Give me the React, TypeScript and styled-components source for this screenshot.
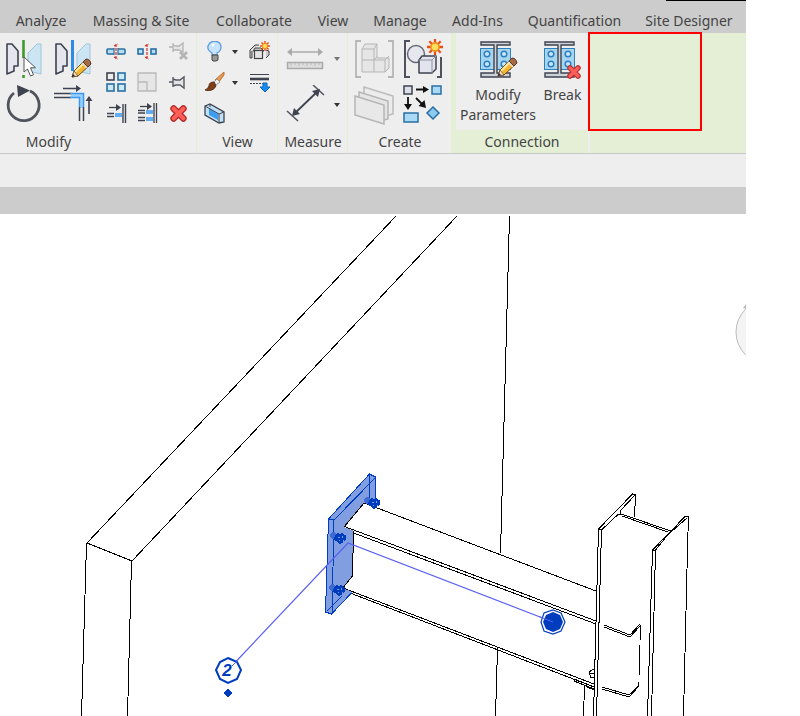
import React from "react";
import styled, { createGlobalStyle } from "styled-components";

const GlobalStyle = createGlobalStyle`
  *, *::before, *::after { box-sizing: border-box; }
  body { margin: 0; background: #ffffff; }
`;

const ink = "#3f4350";
const blue = "#003cbe";

const Page = styled.main`
  padding-right: 54px;
  font-family: "Noto Sans", "Open Sans", sans-serif;
  font-size: 14px;
  line-height: 20px;
  color: #444444;
`;

const TabBar = styled.nav`
  position: relative;
  display: grid;
  grid-template-columns: 76fr 124fr 102fr 56fr 78fr 77fr 117fr 112fr;
  height: 33px;
  padding: 9px 1px 0 3px;
  background: #cccccc;
`;

const WindowEdge = styled.span`
  position: absolute;
  top: 0;
  right: 0;
  width: 80px;
  height: 1px;
  background: #000000;
`;

const Tab = styled.button`
  display: flex;
  justify-content: center;
  padding: 2px 0;
  border: 0;
  background: none;
  font: inherit;
  color: inherit;
  white-space: nowrap;
`;

const Ribbon = styled.section`
  position: relative;
  display: flex;
  height: 121px;
  background: #e4efd6;
  border-bottom: 1px solid #c8c8c8;
`;

const Panel = styled.section<{ $width: number; $gapAfter?: number; $last?: boolean }>`
  display: flex;
  flex-direction: column;
  flex: none;
  width: ${(p) => p.$width}px;
  margin-right: ${(p) => p.$gapAfter ?? 0}px;
  background: #eeeeee;
  border-right: ${(p) => (p.$last ? "2px solid #eeeeee" : "0")};
  box-shadow: ${(p) => (p.$last ? "none" : "inset -1px 0 0 #e2efd0")};
`;

const PanelBody = styled.div<{ $indent?: number }>`
  display: flex;
  gap: 3px;
  height: 97px;
  padding: 3px 0 0 ${(p) => p.$indent ?? 0}px;
`;

const PanelLabel = styled.h2<{ $active?: boolean; $inset?: number }>`
  margin: 0;
  height: 23px;
  padding: 2px ${(p) => p.$inset ?? 0}px 0 0;
  font-size: 14px;
  font-weight: 400;
  text-align: center;
  background: ${(p) => (p.$active ? "#e4efd6" : "transparent")};
`;

const ToolGrid = styled.div<{ $columns: string; $row: number }>`
  display: grid;
  grid-template-columns: ${(p) => p.$columns};
  grid-auto-rows: ${(p) => p.$row}px;
  place-items: center;
`;

const CommandRow = styled.div`
  display: flex;
  align-items: flex-start;
`;

const ToolButton = styled.button`
  display: flex;
  padding: 0;
  border: 0;
  background: none;
`;

const CommandButton = styled.button<{ $width: number }>`
  display: flex;
  flex-direction: column;
  align-items: center;
  gap: 6px;
  width: ${(p) => p.$width}px;
  padding: 3px 0 0;
  border: 0;
  background: none;
  font: inherit;
  color: inherit;
`;

const Highlight = styled.div`
  position: absolute;
  top: -1px;
  left: 588px;
  width: 114px;
  height: 99px;
  border: 2px solid #ff0000;
`;

const OptionsBar = styled.div`
  height: 33px;
  background: #eeeeee;
`;

const DocumentBar = styled.div`
  height: 27px;
  background: #cccccc;
`;

const Drawing = styled.svg`
  display: block;
  width: 100%;
  height: auto;
`;

type ToolProps = { name: string; disabled?: boolean; children: React.ReactNode };

const Large = ({ name, disabled, children }: ToolProps) => (
  <ToolButton aria-label={name} disabled={disabled}>
    <svg width="41" height="40" viewBox="0 0 41 40" fill="none">{children}</svg>
  </ToolButton>
);

const Small = ({ name, disabled, children }: ToolProps) => (
  <ToolButton aria-label={name} disabled={disabled}>
    <svg width="21" height="21" viewBox="0 0 21 21" fill="none">{children}</svg>
  </ToolButton>
);

const Caret = ({ name, muted }: { name: string; muted?: boolean }) => (
  <ToolButton aria-label={name}>
    <svg width="8" height="6" viewBox="0 0 8 6"><path d="M1 1h6L4 5z" fill={muted ? "#777" : "#333"} /></svg>
  </ToolButton>
);

const Pencil = () => (
  <g>
    <path d="M19 38l2-6 12-12 5 5-13 12z" fill="#f5b52e" stroke="#6b4a1c" />
    <path d="M22 33l11-11" stroke="#ffe89a" strokeWidth="2" />
    <path d="M19 38l2-6 4 5z" fill="#f7dfbd" stroke="#5a4630" strokeWidth=".7" />
    <path d="M19 38l1-3 2 2z" fill="#222" />
    <path d="M30 23l3-3q4 0 5 5l-3 3z" fill="#a66a44" stroke="#5a3c2c" />
    <path d="M29 24l5 5" stroke="#ddd" strokeWidth="1.5" />
  </g>
);

const MirrorHalves = () => (
  <g>
    <path d="M3 5h5l6 7v15h-4v5l-7 3z" fill="#e4e6ee" stroke={ink} strokeWidth="1.6" strokeLinejoin="round" />
    <path d="M37 5h-4l-9 9v18l13 3z" fill="#cbe5f4" stroke="#9cc6dc" />
  </g>
);

const Sun = ({ x, y, r }: { x: number; y: number; r: number }) => (
  <g transform={`translate(${x} ${y}) scale(${r / 7})`}>
    <path d="M0-7V7M-7 0H7M-5-5L5 5M-5 5L5-5" stroke="#e8501a" strokeWidth="2" />
    <circle r="3.6" fill="#ffe05a" stroke="#f28a1c" strokeWidth="1.4" />
  </g>
);

const Column = () => (
  <g transform="translate(-2 0)">
    <rect x="4.5" y="9.5" width="30" height="21" fill="#a6d5f2" stroke="#2f7fb8" />
    {[[11, 15], [11, 25], [28, 15], [28, 25]].map(([x, y]) => (
      <circle key={`${x}-${y}`} cx={x} cy={y} r="2.8" fill="#c8e6f8" stroke="#2f80c0" strokeWidth="1.5" />
    ))}
    <path d="M5 3h29v3H21v28h13v4H5v-4h13V6H5z" fill="#cfd1d8" stroke={ink} strokeWidth="1.4" />
  </g>
);

const DeleteMark = ({ x, y, size }: { x: number; y: number; size: number }) => (
  <g transform={`translate(${x} ${y}) scale(${size / 14})`}>
    <path d="M3 3l8 8M11 3l-8 8" stroke="#b52d2b" strokeWidth="5.5" strokeLinecap="round" />
    <path d="M3 3l8 8M11 3l-8 8" stroke="#ff5f58" strokeWidth="3.2" strokeLinecap="round" />
  </g>
);

const ModifyPanel = () => (
  <Panel $width={197}>
    <PanelBody>
      <ToolGrid $columns="49px 49px" $row={46}>
        <Large name="Mirror, pick axis">
          <MirrorHalves />
          <path d="M19.5 1v18M19.5 36v3" stroke="#3d9a2e" strokeWidth="2.6" />
          <path d="M20 18v15l3.5-3 3 7 3-1.2-3-7h5z" fill="#fff" stroke="#555" />
        </Large>
        <Large name="Mirror, draw axis">
          <MirrorHalves />
          <path d="M19.5 1v31" stroke="#2c8be8" strokeWidth="3" />
          <Pencil />
        </Large>
        <Large name="Rotate">
          <path d="M26 6A15.5 15.5 0 1 1 10 8" stroke="#50535b" strokeWidth="2.8" />
          <path d="M13 0l13 5.5L14 12z" fill={ink} />
        </Large>
        <Large name="Trim to corner">
          <path d="M18 8h12.5v15h-4.5V12.5h-8z" fill="#9bd1ff" />
          <path d="M1 8.5h17M1 12.5h17M26.5 22v14M30.5 22v14" stroke={ink} strokeWidth="1.5" />
          <path d="M17 8.5h13.5V22M17 12.5h9.5V22" stroke="#3c98ec" strokeWidth="1.5" />
          <path d="M10 3.5h15M36 13v16" stroke={ink} strokeWidth="1.6" />
          <path d="M23 0l5 3.5L23 7zM32.5 16L36 11l3.5 5z" fill={ink} />
        </Large>
      </ToolGrid>
      <ToolGrid $columns="31px 31px 31px" $row={31}>
        <Small name="Split element">
          <rect x="1" y="8" width="18" height="5" rx="1" fill="#b9def3" stroke="#286fa3" strokeWidth="1.6" />
          <rect x="8" y="6" width="4" height="9" fill="#eee" />
          <path d="M8 7v7M12 7v7" stroke="#286fa3" strokeWidth="1.2" />
          <path d="M10 3v15M8 5l4-2M8 16l4 2" stroke="#d12f28" strokeWidth="1.2" strokeDasharray="3 1" />
        </Small>
        <Small name="Split with gap">
          <rect x="1" y="8" width="5" height="5" fill="#b9def3" stroke="#286fa3" strokeWidth="1.6" />
          <rect x="14" y="8" width="5" height="5" fill="#b9def3" stroke="#286fa3" strokeWidth="1.6" />
          <path d="M10 3v15M8 5l4-2M8 16l4 2" stroke="#d12f28" strokeWidth="1.2" strokeDasharray="3 1" />
        </Small>
        <Small name="Unpin" disabled>
          <path d="M1 6h4M5 2v9M5 4l3 1h3l4-3v9l-4-2H8L5 9" fill="#e4e4e4" stroke="#b4b4b4" strokeWidth="1.3" />
          <path d="M12 11l7 7M19 11l-7 7" stroke="#b4b4b4" strokeWidth="2.8" />
        </Small>
        <Small name="Array">
          <rect x="1" y="1" width="7" height="7" fill="#eee" stroke={ink} strokeWidth="1.6" />
          <rect x="12" y="1" width="7" height="7" fill="#cde9f8" stroke="#286fa3" strokeWidth="1.6" />
          <rect x="1" y="12" width="7" height="7" fill="#cde9f8" stroke="#286fa3" strokeWidth="1.6" />
          <rect x="12" y="12" width="7" height="7" fill="#cde9f8" stroke="#286fa3" strokeWidth="1.6" />
        </Small>
        <Small name="Scale" disabled>
          <path d="M1 1h18v18H1zM1 10h9v9" fill="#e6e6e6" stroke="#b9b9b9" strokeWidth="1.3" />
        </Small>
        <Small name="Pin">
          <path d="M1 10h4M5 5v10M5 7l3 1h4l4-3v11l-4-3H8l-3 1" fill="#e4e4e8" stroke="#555861" strokeWidth="1.4" />
        </Small>
        <Small name="Trim single">
          <path d="M1 10.5h7M1 13.5h7M17 1v19M19.5 1v19" stroke={ink} strokeWidth="1.4" />
          <path d="M9 12h7" stroke="#62adf2" strokeWidth="4" />
          <path d="M3 4.5h8" stroke={ink} strokeWidth="1.3" />
          <path d="M10 1l5 3.5L10 8z" fill={ink} />
        </Small>
        <Small name="Trim multiple">
          <path d="M1 7.5h7M1 10h7M1 14.5h7M1 17.5h7M17 0v20M19.5 0v20" stroke={ink} strokeWidth="1.3" />
          <path d="M9 9h7M9 16h7" stroke="#62adf2" strokeWidth="4" />
          <path d="M3 3.5h8" stroke={ink} strokeWidth="1.3" />
          <path d="M10 0l5 3.5L10 7z" fill={ink} />
        </Small>
        <Small name="Delete"><DeleteMark x={2} y={2} size={17} /></Small>
      </ToolGrid>
    </PanelBody>
    <PanelLabel $inset={100}>Modify</PanelLabel>
  </Panel>
);

const ViewPanel = () => (
  <Panel $width={81}>
    <PanelBody $indent={1}>
      <ToolGrid $columns="32px 10px 38px" $row={31}>
        <Small name="Hide in view">
          <path d="M8 14v-2Q3 9 4 5 6 0 11 0q6 1 6 6 0 4-4 6v2z" fill="#c6e4ff" stroke="#5f9bdc" strokeWidth="1.3" />
          <path d="M8 5l2-2" stroke="#fff" strokeWidth="2" />
          <path d="M8 14h6v5l-2 1H9l-1-1z" fill="#999" stroke="#444" />
        </Small>
        <Caret name="Hide options" />
        <Small name="New view">
          <path d="M1 9l5-5h4M1 9v8h2v-7M17 9l3 1v4l-3 3M4 10h11l-3-3H6z" fill="#ccc" stroke="#444" />
          <rect x="5.5" y="9.5" width="8" height="8" fill="#e5e5e5" stroke="#444" strokeWidth="1.2" />
          <Sun x={16} y={5} r={5} />
        </Small>
        <Small name="Override graphics">
          <path d="M20 0l-9 8 3 3 6-8z" fill="#ec9b50" stroke="#b66e31" />
          <path d="M13 7l-3 3 2 3 4-3z" fill="#eee" stroke="#888" strokeWidth=".8" />
          <path d="M10 10q-5 0-5 4-1 3-4 4 8 2 11-4z" fill="#7b4019" stroke="#5e2d10" />
        </Small>
        <Caret name="Override options" />
        <Small name="Displace lines">
          <path d="M1 2.5h19" stroke={ink} />
          <path d="M1 7h19" stroke={ink} strokeWidth="2.6" />
          <path d="M1 11.5h14" stroke={ink} strokeDasharray="2 1" />
          <path d="M14 11h4v4h3l-5 5-5-5h3z" fill="#168cf2" stroke="#0867bb" />
        </Small>
        <Small name="Selection box">
          <path d="M1 3l5-2 14 8v10l-5 1L1 12z" fill="#bfe0f5" stroke={ink} strokeWidth="1.3" />
          <path d="M5 5l9 6v6L5 12z" fill="#3c9cf4" />
          <path d="M1 3l14 8v9M15 11l5-2M6 1v3" stroke={ink} />
        </Small>
      </ToolGrid>
    </PanelBody>
    <PanelLabel>View</PanelLabel>
  </Panel>
);

const MeasurePanel = () => (
  <Panel $width={70}>
    <PanelBody>
      <ToolGrid $columns="54px 10px" $row={46}>
        <Large name="Measure between references" disabled>
          <path d="M5 13h30" stroke="#aaa" strokeWidth="1.5" />
          <path d="M2 13l5-4v8zM38 13l-5-4v8z" fill="#aaa" />
          <path d="M2.5 23.5h35v6h-35z" fill="#ddd" stroke="#aaa" strokeWidth="1.5" />
          <path d="M6 24v3M10 24v2M14 24v3M18 24v2M22 24v3M26 24v2M30 24v3M34 24v2" stroke="#bbb" />
        </Large>
        <Caret name="Measure options" muted />
        <Large name="Aligned dimension">
          <path d="M9 29L33 6" stroke={ink} strokeWidth="1.8" />
          <path d="M2 26l11 10M28 0l11 10" stroke="#555862" strokeWidth="1.6" />
          <path d="M7 31l2-8 6 6zM35 4l-8 2 6 6z" fill={ink} />
        </Large>
        <Caret name="Dimension options" />
      </ToolGrid>
    </PanelBody>
    <PanelLabel>Measure</PanelLabel>
  </Panel>
);

const CreatePanel = () => (
  <Panel $width={104} $gapAfter={4}>
    <PanelBody $indent={2}>
      <ToolGrid $columns="49px 49px" $row={46}>
        <Large name="Create assembly" disabled>
          <path d="M7 2H2v36h5M34 2h5v36h-5" stroke="#b5b5b5" strokeWidth="1.8" />
          <path d="M8 10l3-5h12v14h12v10l-4 4H8z" fill="#e6e6e6" stroke="#b5b5b5" strokeLinejoin="round" />
          <path d="M8 10h12v23M8 21h23v12M20 10l3-5M20 21l3-3M31 21l4-4" stroke="#b5b5b5" />
        </Large>
        <Large name="Create parts">
          <path d="M7 2H2v36h5M34 38h4V18" stroke="#4f525c" strokeWidth="2" />
          <circle cx="13" cy="15" r="8.5" fill="#e6e8ef" stroke="#686c76" strokeWidth="1.5" />
          <path d="M16 21l3-4h14v13l-4 4H16z" fill="#e1e4ed" stroke={ink} strokeWidth="1.5" strokeLinejoin="round" />
          <path d="M16 21h13v13M29 21l4-4" stroke="#8f93a0" />
          <Sun x={32} y={8} r={8} />
        </Large>
        <Large name="Create group" disabled>
          <path d="M10 8V2l29 9v18l-4 1" fill="#ececec" stroke="#bbb" strokeWidth="1.5" />
          <path d="M5 12V7l29 9v18l-4 1" fill="#e5e5e5" stroke="#b5b5b5" strokeWidth="1.5" />
          <path d="M1 11l29 9v19L1 30z" fill="#e8e8e8" stroke="#b5b5b5" strokeWidth="1.5" />
        </Large>
        <Large name="Create similar">
          <rect x="1" y="1" width="8" height="8" fill="#dde0e8" stroke={ink} strokeWidth="1.5" />
          <rect x="29" y="1" width="9" height="8" fill="#a9d9f4" stroke="#286fa3" strokeWidth="1.5" />
          <rect x="1" y="28" width="14" height="9" fill="#a9d9f4" stroke="#286fa3" strokeWidth="1.5" />
          <path d="M30 22l6 6-6 6-6-6z" fill="#8dcaf0" stroke="#286fa3" strokeWidth="1.5" />
          <path d="M13 4.5h9M5 12v9M13 13l7 7" stroke="#111" strokeWidth="1.8" />
          <path d="M20 1l6 3.500L20 8zM1 19h8l-4 6zM23 23l-1.500-8-6 6z" fill="#111" />
        </Large>
      </ToolGrid>
    </PanelBody>
    <PanelLabel>Create</PanelLabel>
  </Panel>
);

const ConnectionPanel = () => (
  <Panel $width={134} $last>
    <PanelBody>
      <CommandRow>
        <CommandButton $width={84}>
          <svg width="40" height="40" viewBox="0 0 40 40" fill="none">
            <Column />
            <g transform="translate(1 -1)"><Pencil /></g>
          </svg>
          <span>Modify<br />Parameters</span>
        </CommandButton>
        <CommandButton $width={45}>
          <svg width="41" height="40" viewBox="0 0 41 40" fill="none"><Column /><DeleteMark x={25} y={26} size={14} /></svg>
          <span>Break</span>
        </CommandButton>
      </CommandRow>
    </PanelBody>
    <PanelLabel $active>Connection</PanelLabel>
  </Panel>
);

const Bolt = ({ x, y }: { x: number; y: number }) => (
  <g transform={`translate(${x} ${y})`} shapeRendering="crispEdges">
    <path d="M-10-4l3-2 3 1 2 4-2 3-4-1-2-2z" fill="#3f6bd0" />
    <path d="M-5-3l3-2 2 1 2-1 2 2h2v5l-3 1v2l-4 1-3-3-2-1z" fill={blue} />
    <path d="M-2-1h2M2-2v2M-1 2h1M3 2h1" stroke="#7f9fe4" fill="none" />
  </g>
);

const ModelView = () => (
  <Drawing viewBox="0 214 746 502" role="img" aria-label="Beam to column connection">
    <g fill="none" stroke="#000" strokeWidth="1" shapeRendering="crispEdges">
      <path d="M396 216L87 543l45 18L457 216M86.500 543L81.500 716M131.500 561l-4 155M509.500 216l-9 337M497.500 648l-2 68" />
      <path d="M364 503L596 591M343 526l253 95M343 529l253 95M343 588l251 96M345 591l249 96" />
    </g>
    <g shapeRendering="crispEdges" stroke={blue} fill="none">
      <path d="M329 519l41-45 6 3v28l-12-2-20 24 10 4-1 45-10 12 9 4-20 22-6-2z" fill="#809ee0" stroke="none" />
      <path d="M375.500 502v-25l-6-3-41 45-3 93 6 2 20-21M329 519l5 1 42-43M334 520l-2 94M369.500 475v24M327 611l15-15" />
    </g>
    <path d="M364 503l-20 24M353.500 531l-1 45-9 11" fill="none" stroke="#000" shapeRendering="crispEdges" />
    <Bolt x={374} y={503} />
    <Bolt x={340} y={538} />
    <Bolt x={339} y={590} />
    <g fill="none" stroke="#000" strokeWidth="1" shapeRendering="crispEdges">
      <path d="M593.500 716l5-187 34-35 3 1-1 22M596.500 716l5-186 17-16h3l49 17M635 495l-15 16v3M622 516l46 16M598 529h4" />
      <path d="M647.500 716l5-166 33-34h3l-1 32-4 168M651.500 716l4-166 13-16M652 550h4M687 518l-16 14-3 3" />
      <path d="M604 625l26 10 10-11M604 627l26 10 10-11v14M639.500 645v30M602 687l27 8 9-9M602 689l27 8 9-10v-5M584.500 686l-1 30" />
      <path d="M594 669l-5 3 2 6 3-1M594 673h-4M574 679l20 8M574 681l20 8M574 679v2M587 687l7 3" />
    </g>
    <g fill="none" stroke={blue}>
      <path d="M228 670L348 543l205 79" stroke="#5960f5" strokeWidth="1.200" />
      <path d="M553 610l8 3 4 9-4 9-8 3-9-3-3-9 3-9z" fill="#fff" strokeWidth="1.200" />
      <path d="M553 612l7 3 3 7-3 7-7 3-7-3-3-7 3-7z" fill={blue} stroke="none" />
      <path d="M539 616.500l14 5.500" stroke="#5960f5" />
      <path d="M228 658l9 4 4 8-4 9-9 4-8-4-4-9 4-8z" fill="#fff" strokeWidth="2" />
      <path d="M232 666l5-5" stroke="#5960f5" />
      <path d="M228 689l4 4-4 4-4-4z" fill={blue} />
    </g>
    <text x="227" y="676" textAnchor="middle" fontFamily="Liberation Sans, sans-serif" fontSize="17" fontWeight="700" fontStyle="italic" fill={blue}>2</text>
    <circle cx="768" cy="332" r="32" fill="#f4f4f4" stroke="#bbbbbb" />
    <path d="M743 308l3-4v5z" fill="#bbbbbb" />
  </Drawing>
);

const tabs = ["Analyze", "Massing & Site", "Collaborate", "View", "Manage", "Add-Ins", "Quantification", "Site Designer"];

export default function App() {
  return (
    <>
      <GlobalStyle />
      <Page>
        <TabBar aria-label="Ribbon tabs">
          <WindowEdge />
          {tabs.map((tab) => <Tab key={tab}>{tab}</Tab>)}
        </TabBar>
        <Ribbon>
          <ModifyPanel />
          <ViewPanel />
          <MeasurePanel />
          <CreatePanel />
          <ConnectionPanel />
          <Highlight />
        </Ribbon>
        <OptionsBar />
        <DocumentBar />
        <ModelView />
      </Page>
    </>
  );
}
